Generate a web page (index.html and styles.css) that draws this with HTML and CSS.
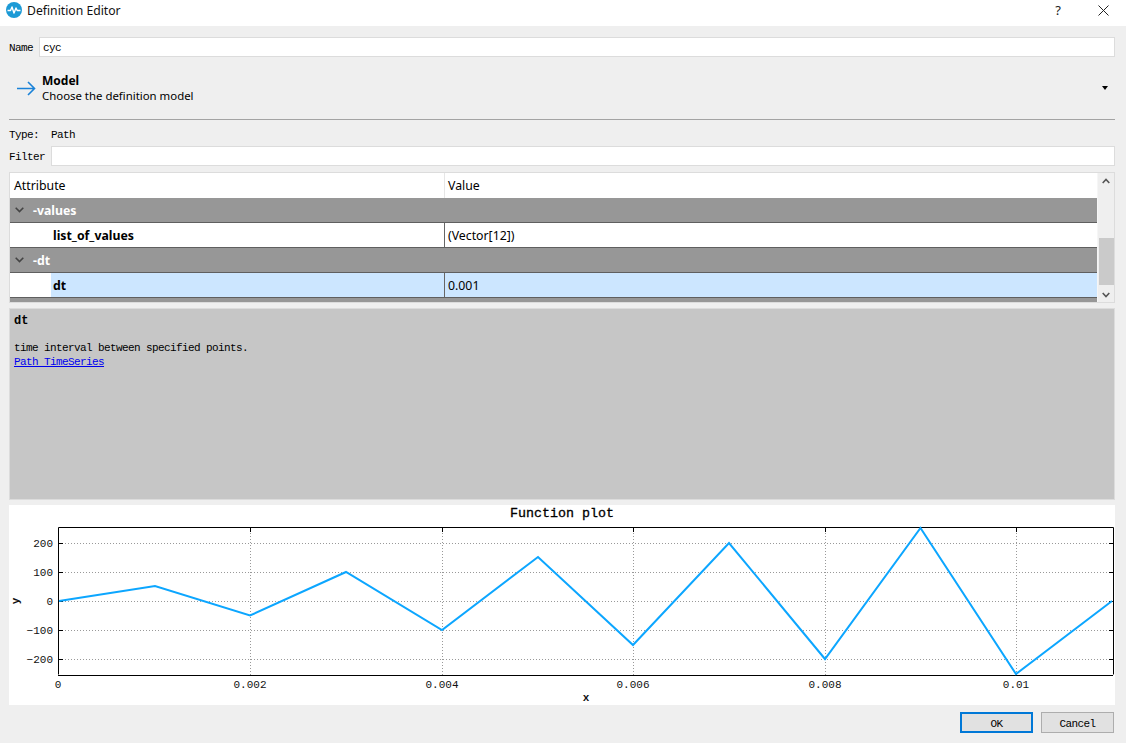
FILE: index.html
```html
<!DOCTYPE html>
<html lang="en">
<head>
<meta charset="utf-8">
<title>Definition Editor</title>
<link rel="stylesheet" href="styles.css">
</head>
<body>
<div class="window">
  <header class="titlebar">
    <svg class="app-icon" width="16" height="16" viewBox="0 0 16 16"><circle cx="8" cy="8" r="8" fill="#1c9ad6"/><path d="M1.5 8.5H4.5L6 5L8 11L10 6L11.2 8.5H14.5" fill="none" stroke="#fff" stroke-width="1.4" stroke-linejoin="round"/></svg>
    <span class="title-text">Definition Editor</span>
    <span class="title-spacer"></span>
    <span class="help">?</span>
    <svg class="close" width="11" height="11" viewBox="0 0 11 11"><path d="M.5.5L10.5 10.5M10.5.5L.5 10.5" stroke="#222" stroke-width="1" fill="none"/></svg>
  </header>
  <main class="content">
    <div class="field-row name-row">
      <label class="mono">Name</label>
      <div class="input mono">cyc</div>
    </div>
    <div class="command-link">
      <svg class="arrow" width="19" height="15" viewBox="0 0 19 15"><path d="M0 7.5H17.5M11 1L17.5 7.5L11 14" fill="none" stroke="#1a82d8" stroke-width="1.6"/></svg>
      <div class="command-text">
        <strong>Model</strong>
        <span>Choose the definition model</span>
      </div>
      <span class="dropdown"></span>
    </div>
    <hr class="separator">
    <div class="type-row mono"><span class="type-label">Type:</span><span>Path</span></div>
    <div class="field-row filter-row">
      <label class="mono">Filter</label>
      <div class="input"></div>
    </div>
    <section class="tree">
      <div class="tree-body">
        <div class="row head"><div class="col-a">Attribute</div><div class="col-b">Value</div></div>
        <div class="row group"><svg class="chev" width="9" height="6" viewBox="0 0 9 6"><path d="M.7.7L4.5 4.5L8.3.7" fill="none" stroke="#444" stroke-width="1.6"/></svg><span>-values</span></div>
        <div class="row item"><div class="col-a"><b>list_of_values</b></div><div class="col-b">(Vector[12])</div></div>
        <div class="row group"><svg class="chev" width="9" height="6" viewBox="0 0 9 6"><path d="M.7.7L4.5 4.5L8.3.7" fill="none" stroke="#444" stroke-width="1.6"/></svg><span>-dt</span></div>
        <div class="row item selected"><div class="col-a"><b>dt</b></div><div class="col-b">0.001</div></div>
        <div class="row sliver"></div>
      </div>
      <div class="scrollbar">
        <svg width="8" height="6" viewBox="0 0 8 6"><path d="M.7 5L4 1.5L7.3 5" fill="none" stroke="#555" stroke-width="1.6"/></svg>
        <div class="track"><div class="thumb"></div></div>
        <svg width="8" height="6" viewBox="0 0 8 6"><path d="M.7 1L4 4.5L7.3 1" fill="none" stroke="#555" stroke-width="1.6"/></svg>
      </div>
    </section>
    <section class="doc mono">
      <h4>dt</h4>
      <p>time interval between specified points.<br><a href="#">Path TimeSeries</a></p>
    </section>
    <section class="plot">
      <svg width="1106" height="200" viewBox="9 505 1106 200">
        <text class="p-title" x="562" y="517" text-anchor="middle">Function plot</text>
        <g class="grid">
          <path d="M59 543.5H1113M59 572.5H1113M59 601.5H1113M59 630.5H1113M59 659.5H1113"/>
          <path d="M250.5 527V675M442.5 527V675M633.5 527V675M825.5 527V675M1016.5 527V675"/>
        </g>
        <path class="frame" d="M58.5 674.5V527.5H1113.5V674.5M58 675.5H1113"/>
        <path class="frame" d="M59 543.5H63M59 572.5H63M59 601.5H63M59 630.5H63M59 659.5H63M1113 543.5H1109M1113 572.5H1109M1113 601.5H1109M1113 630.5H1109M1113 659.5H1109M250.5 528V532M442.5 528V532M633.5 528V532M825.5 528V532M1016.5 528V532"/>
        <polyline class="curve" points="59,601 155,586 250,615.5 346,572 442,630 538,557 633,645 729,543 825,659 920.5,528 1016,674 1112,601"/>
        <g class="tick">
          <text x="53" y="547" text-anchor="end">200</text>
          <text x="53" y="576" text-anchor="end">100</text>
          <text x="53" y="605" text-anchor="end">0</text>
          <text x="53" y="634" text-anchor="end">−100</text>
          <text x="53" y="663" text-anchor="end">−200</text>
          <text x="58" y="688" text-anchor="middle">0</text>
          <text x="250" y="688" text-anchor="middle">0.002</text>
          <text x="442" y="688" text-anchor="middle">0.004</text>
          <text x="633" y="688" text-anchor="middle">0.006</text>
          <text x="825" y="688" text-anchor="middle">0.008</text>
          <text x="1016" y="688" text-anchor="middle">0.01</text>
          <text class="axis" x="586" y="701" text-anchor="middle">x</text>
          <text class="axis" transform="translate(19 601) rotate(-90)" text-anchor="middle">y</text>
        </g>
      </svg>
    </section>
    <footer class="buttons">
      <button class="btn primary mono">OK</button>
      <button class="btn mono">Cancel</button>
    </footer>
  </main>
</div>
</body>
</html>
```
FILE: styles.css
```css
* { box-sizing: border-box; }
html, body { margin: 0; padding: 0; }
body {
  width: 1126px;
  height: 743px;
  overflow: hidden;
  background: #efefef;
  font-family: "Noto Sans", "Liberation Sans", sans-serif;
  font-size: 12px;
  color: #000;
}
.mono { font-family: "Liberation Mono", monospace; font-size: 11px; letter-spacing: -0.6px; }
.window { display: flex; flex-direction: column; height: 743px; }
.titlebar {
  height: 26px;
  background: #fff;
  display: flex;
  align-items: center;
  padding: 0 17px 6px 6px;
}
.app-icon { margin-right: 5px; }
.title-text { font-size: 12.2px; color: #111; }
.title-spacer { flex: 1; }
.help { font-size: 13px; margin-right: 37px; color: #222; }
.content { padding: 11px 11px 0 9px; display: flex; flex-direction: column; flex: 1; }
.field-row { display: flex; align-items: center; gap: 6px; height: 20px; }
.field-row label { padding-top: 2px; }
.input {
  flex: 1;
  height: 20px;
  line-height: 20px;
  background: #fff;
  border: 1px solid #dcdcdc;
  padding-left: 3px;
}
.command-link {
  height: 62px;
  display: flex;
  align-items: center;
  padding: 0 7px 0 8px;
}
.arrow { margin-right: 6px; }
.command-text { display: flex; flex-direction: column; flex: 1; line-height: 15px; }
.command-text strong { font-weight: 700; }
.command-text span { font-size: 11.4px; }
.dropdown { width: 0; height: 0; border: 3.5px solid transparent; border-top: 4px solid #000; border-bottom: 0; margin-bottom: 1px; }
.separator { height: 1px; width: 100%; margin: 0; border: 0; background: #a3a3a3; }
.type-row { height: 26px; display: flex; align-items: center; gap: 12px; padding-top: 3px; }
.type-label { width: 30px; }
.filter-row { height: 20px; }
.tree {
  margin-top: 6px;
  height: 131px;
  display: flex;
  background: #fff;
  border: 1px solid #dcdcdc;
  font-size: 12.3px;
}
.tree-body { flex: 1; overflow: hidden; }
.row { display: flex; height: 25px; align-items: center; }
.col-a { width: 435px; flex: none; height: 100%; padding-left: 4px; display: flex; align-items: center; border-right: 1px solid #e6e6e6; }
.col-b { flex: 1; height: 100%; padding-left: 3px; display: flex; align-items: center; }
.group { background: #979797; color: #fff; font-weight: 700; border-bottom: 1px solid #5f5f5f; height: 25px; }
.chev { margin: 0 0 0 5px; }
.group span { margin-left: 9px; }
.item { border-bottom: 1px solid #5f5f5f; background: #fff; }
.item .col-a { padding-left: 43px; border-right: 1px solid #666; }
.selected .col-a { background: linear-gradient(to right, #fff 41px, #cce6ff 41px); }
.selected .col-b { background: #cce6ff; }
.sliver { height: 4px; background: #979797; }
.scrollbar {
  width: 17px;
  flex: none;
  background: #efefef;
  display: flex;
  flex-direction: column;
  align-items: center;
  padding: 5px 0 4px;
  border-left: 1px solid #f6f6f6;
}
.track { flex: 1; width: 15px; margin: 2px 0; display: flex; flex-direction: column; justify-content: flex-end; padding-bottom: 5px; }
.thumb { height: 47px; background: #cacaca; }
.doc {
  margin-top: 5px;
  height: 192px;
  background: #c6c6c6;
  border: 1px solid #dcdcdc;
  padding: 5px 4px;
}
.doc h4 { margin: 0 0 13px; font-size: 12px; line-height: 14px; font-weight: 700; letter-spacing: 0; }
.doc p { margin: 0; line-height: 14px; }
.doc a { color: #0000ee; }
.plot { margin-top: 5px; height: 200px; background: #fff; }
.plot svg { display: block; }
.p-title { font-family: "Liberation Mono", monospace; font-size: 13.33px; stroke: #000; stroke-width: 0.3px; }
.grid path { stroke: #999; stroke-width: 1; stroke-dasharray: 1 2; fill: none; }
.frame { stroke: #000; stroke-width: 1; fill: none; }
.curve { stroke: #0ca6ff; stroke-width: 2; fill: none; stroke-linejoin: miter; }
.tick text { font-family: "Liberation Mono", monospace; font-size: 11px; fill: #111; }
.tick .axis { font-weight: 700; }
.buttons { display: flex; justify-content: flex-end; gap: 8px; margin-top: 7px; padding-right: 1px; }
.btn {
  width: 73px;
  height: 21px;
  padding: 2px 0 0;
  color: #000;
  background: #e1e1e1;
  border: 1px solid #adadad;
}
.btn.primary { border: 2px solid #0078d7; }
```
